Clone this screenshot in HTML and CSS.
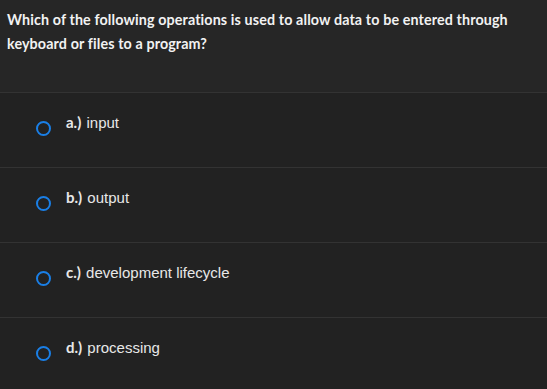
FILE: index.html
```html
<!DOCTYPE html>
<html>
<head>
<meta charset="utf-8">
<link rel="stylesheet" href="styles.css">
</head>
<body>
<div class="question">Which of the following operations is used to allow data to be entered through keyboard or files to a program?</div>
<ul class="options">
  <li class="option"><span class="radio"></span><span class="label"><b>a.)</b> input</span></li>
  <li class="option"><span class="radio"></span><span class="label"><b>b.)</b> output</span></li>
  <li class="option"><span class="radio"></span><span class="label"><b>c.)</b> development lifecycle</span></li>
  <li class="option"><span class="radio"></span><span class="label"><b>d.)</b> processing</span></li>
</ul>
</body>
</html>
```

FILE: styles.css
```css
html, body {
  margin: 0;
  padding: 0;
  background: #222222;
  height: 100%;
  overflow: hidden;
}
.question {
  background: #262626;
  color: #f2f2f2;
  font-family: "Lato", sans-serif;
  font-weight: 700;
  font-size: 14.3px;
  letter-spacing: 0.12px;
  line-height: 24px;
  padding: 8px 7px 0 7px;
  border-bottom: 1px solid #333333;
  box-sizing: border-box;
  height: 93px;
}
.options {
  list-style: none;
  margin: 0;
  padding: 0;
}
.option {
  display: flex;
  align-items: flex-start;
  height: 75px;
  box-sizing: border-box;
  border-bottom: 1px solid #333333;
  padding: 20px 0 0 36px;
}
.option:last-child { border-bottom: none; }
.radio {
  width: 11px;
  height: 11px;
  border: 2px solid #1a7fe6;
  border-radius: 50%;
  margin-top: 8px;
  flex: none;
}
.label {
  margin-left: 15px;
  font-family: "Liberation Sans", Arial, sans-serif;
  font-size: 15px;
  color: #e8e8e8;
  line-height: 18px;
}
.label b {
  font-family: "Lato", sans-serif;
  font-weight: 700;
  font-size: 15px;
  margin-right: 1px;
}
```
